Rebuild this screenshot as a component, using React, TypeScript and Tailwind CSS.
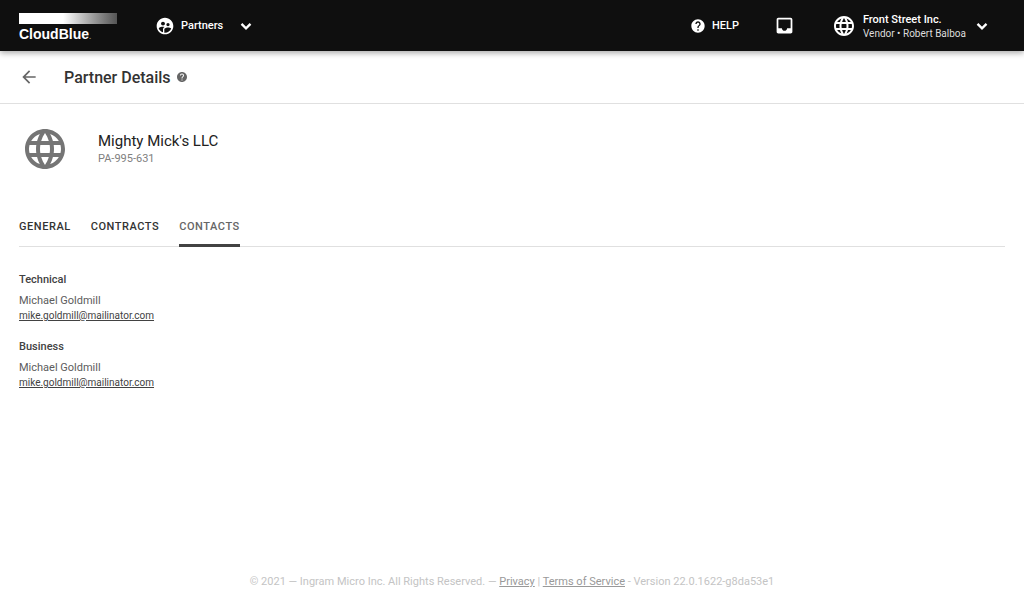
import {
  MdArrowBack,
  MdHelp,
  MdInbox,
  MdLanguage,
  MdSupervisedUserCircle,
} from "react-icons/md";

const tabs = ["General", "Contracts", "Contacts"];

const contacts = [
  { role: "Technical", name: "Michael Goldmill", email: "mike.goldmill@mailinator.com" },
  { role: "Business", name: "Michael Goldmill", email: "mike.goldmill@mailinator.com" },
];

function Chevron({ className }: { className: string }) {
  return (
    <svg viewBox="0 0 24 24" className={className} fill="none" stroke="currentColor" strokeWidth="2.8" aria-hidden="true">
      <path d="M6.6 9.4 12 14.8l5.4-5.4" />
    </svg>
  );
}

function Logo() {
  return (
    <a href="#home" className="flex w-[98px] flex-col gap-px pt-[7px]" aria-label="CloudBlue">
      <span className="h-[11px] bg-linear-to-r from-white from-45% to-[#555555]" />
      <span className="font-['Liberation_Sans',sans-serif] text-[14px] leading-[18px] font-bold">
        CloudBlue<span className="text-[8px] text-[#888888]">.</span>
      </span>
    </a>
  );
}

function TopBar() {
  return (
    <header className="relative flex h-[51px] items-center bg-[#0f0f0f] pr-8 pl-[19px] text-white shadow-[0_2px_6px_rgba(0,0,0,0.35)]">
      <Logo />
      <button className="ml-[38px] flex items-center text-[11px] leading-4 font-medium">
        <MdSupervisedUserCircle size={20} />
        <span className="ml-1.5 pt-px">Partners</span>
        <Chevron className="ml-[13px] size-5" />
      </button>
      <div className="ml-auto flex items-center">
        <a href="#help" className="flex items-center gap-1.5 text-[11px] leading-4 font-medium">
          <MdHelp size={16} />
          <span className="pt-px">HELP</span>
        </a>
        <button className="ml-[35px]" aria-label="Inbox">
          <MdInbox size={21} />
        </button>
        <button className="ml-[37px] flex items-center text-left">
          <MdLanguage size={24} />
          <span className="ml-[7px] flex flex-col pt-px">
            <span className="text-[11px] leading-[14px] font-medium">Front Street Inc.</span>
            <span className="text-[10px] leading-[13px] text-[#dddddd]">Vendor • Robert Balboa</span>
          </span>
          <Chevron className="ml-1.5 size-5" />
        </button>
      </div>
    </header>
  );
}

function TitleBar() {
  return (
    <div className="flex h-[53px] items-center border-b border-[#e0e0e0] pl-[19px]">
      <button aria-label="Back" className="text-[#666666]">
        <MdArrowBack size={20} />
      </button>
      <h1 className="ml-[25px] pt-0.5 text-[16px] leading-5 font-medium text-[#333333]">Partner Details</h1>
      <button aria-label="About this page" className="ml-[5px] text-[#666666]">
        <MdHelp size={12} />
      </button>
    </div>
  );
}

export default function App() {
  return (
    <div className="flex min-h-screen flex-col bg-white font-[Roboto,sans-serif]">
      <TopBar />
      <TitleBar />
      <main className="flex-1 px-[19px]">
        <section className="flex items-center pt-[21px]">
          <MdLanguage size={48} className="ml-0.5 text-[#757575]" />
          <div className="ml-[29px]">
            <h2 className="text-[15px] leading-[19px] text-[#212121]">Mighty Mick's LLC</h2>
            <p className="text-[11px] leading-4 text-[#808080]">PA-995-631</p>
          </div>
        </section>
        <nav role="tablist" className="mt-[33px] flex gap-5 border-b border-[#e0e0e0]">
          {tabs.map((tab) => (
            <button
              key={tab}
              role="tab"
              aria-selected={tab === "Contacts"}
              className="-mb-px h-[41px] border-b-[3px] border-transparent pt-1 text-[11px] leading-4 font-medium tracking-wider text-[#333333] uppercase aria-selected:border-[#424242] aria-selected:text-[#666666]"
            >
              {tab}
            </button>
          ))}
        </nav>
        <div className="flex flex-col gap-4 pt-[25px]">
          {contacts.map((c) => (
            <section key={c.role}>
              <h3 className="text-[11px] leading-4 font-medium text-[#424242]">{c.role}</h3>
              <p className="mt-[5px] text-[11px] leading-4 text-[#5c5c5c]">{c.name}</p>
              <a href={`mailto:${c.email}`} className="block w-fit text-[10px] leading-[14px] text-[#424242] underline">
                {c.email}
              </a>
            </section>
          ))}
        </div>
      </main>
      <footer className="pb-[19px] text-center text-[11px] leading-4 text-[#c4c4c4]">
        © 2021 — Ingram Micro Inc. All Rights Reserved. —{" "}
        <a href="#privacy" className="text-[#999999] underline">Privacy</a> |{" "}
        <a href="#terms" className="text-[#999999] underline">Terms of Service</a> - Version 22.0.1622-g8da53e1
      </footer>
    </div>
  );
}
